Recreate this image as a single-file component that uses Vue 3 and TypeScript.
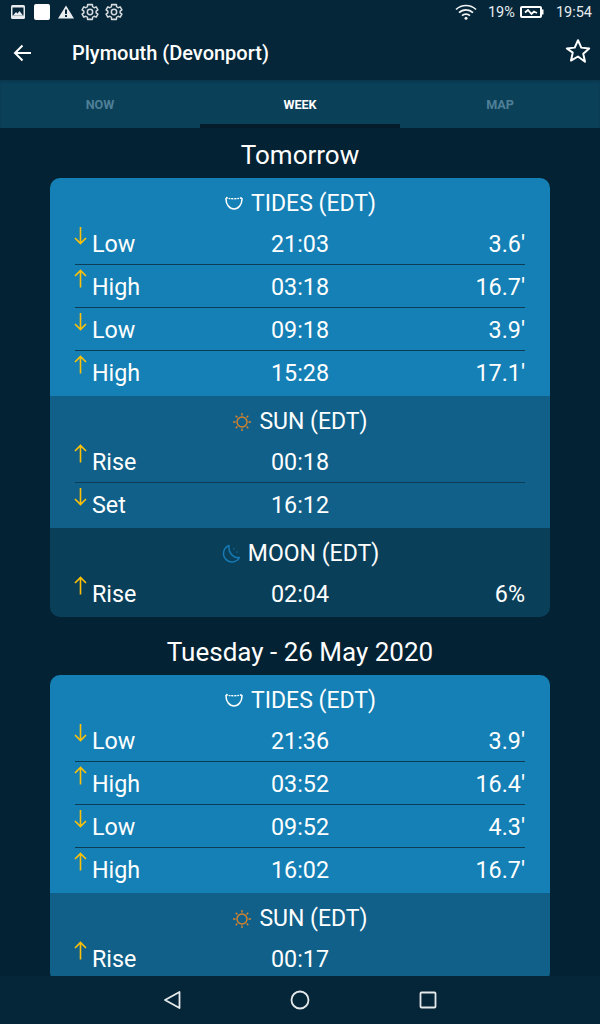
<template>
  <div class="screen">
    <div class="status-bar">
      <div class="status-left">
        <svg class="ic" width="24" height="24" viewBox="0 0 24 24">
          <rect x="5" y="5" width="14" height="14" rx="1.500" fill="#e8ecef" />
          <rect x="6.500" y="7.500" width="11" height="8" fill="#042638" />
          <path d="M7 15.500l3-3.500 1.500 1.500 2-2.500 3.500 4.500z" fill="#e8ecef" />
        </svg>
        <span class="box-slot"><span class="white-box"></span></span>
        <svg class="ic" width="24" height="24" viewBox="0 0 24 24">
          <path d="M12 5.500L20 18.500H4z" fill="#e8ecef" />
          <rect x="11" y="9.500" width="2" height="4.500" fill="#042638" />
          <rect x="11" y="15" width="2" height="2" fill="#042638" />
        </svg>
        <svg v-for="n in 2" :key="n" class="ic" width="24" height="24" viewBox="-1.500 -1.500 27 27">
          <path d="M18.900 13a7 7 0 0 0 0-2l2-1.500-1.900-3.300-2.300 1a7 7 0 0 0-1.700-1L14.700 3.700h-5.400L9 6.200a7 7 0 0 0-1.700 1l-2.300-1-1.900 3.300 2 1.500a7 7 0 0 0 0 2l-2 1.500 1.900 3.300 2.300-1a7 7 0 0 0 1.700 1l.3 2.500h5.400l.3-2.500a7 7 0 0 0 1.700-1l2.300 1 1.900-3.300z" fill="none" stroke="#d5dade" stroke-width="1.700" stroke-linejoin="round" />
          <circle cx="12" cy="12" r="3" fill="none" stroke="#d5dade" stroke-width="1.700" />
        </svg>
      </div>
      <div class="status-right">
        <svg class="wifi" width="22" height="16" viewBox="0 0 22 16">
          <path d="M1 5.500a14.500 14.500 0 0 1 20 0M4 8.700a10 10 0 0 1 14 0M7 11.700a5.700 5.700 0 0 1 8 0" fill="none" stroke="#f2f4f5" stroke-width="1.700" />
          <circle cx="11" cy="14.300" r="1.500" fill="#f2f4f5" />
        </svg>
        <span class="batt-text">19%</span>
        <svg width="25" height="14" viewBox="0 0 25 14">
          <rect x="2" y="2" width="20" height="10" rx="1" fill="none" stroke="#fff" stroke-width="2" />
          <rect x="22.500" y="4.500" width="2" height="5" fill="#fff" />
          <path d="M6 7.500l3-2.500 3.500 4 2.500-2.500 3 1.500" fill="none" stroke="#fff" stroke-width="1.800" />
        </svg>
        <span class="clock">19:54</span>
      </div>
    </div>

    <div class="toolbar">
      <svg class="back" width="24" height="24" viewBox="0 0 24 24">
        <path d="M20 12H4.500M11.500 4.500L4 12l7.500 7.500" fill="none" stroke="#fff" stroke-width="2" />
      </svg>
      <div class="toolbar-title">Plymouth (Devonport)</div>
      <svg class="star" width="28" height="28" viewBox="0 0 24 24">
        <path d="M12 2.800l2.800 6.300 6.800.7-5.100 4.600 1.500 6.800L12 16.700l-6 3.500 1.500-6.800L2.400 9.800l6.800-.7z" fill="none" stroke="#fff" stroke-width="1.700" stroke-linejoin="round" />
      </svg>
    </div>

    <div class="tabs">
      <div v-for="tab in tabs" :key="tab" class="tab" :class="{ active: tab === 'WEEK' }">{{ tab }}</div>
    </div>

    <div class="content">
      <div v-for="day in days" :key="day.title" class="day">
        <div class="day-title">{{ day.title }}</div>
        <div class="card">
          <div v-for="section in day.sections" :key="section.name" class="section" :class="section.kind">
            <div class="section-head">
              <svg v-if="section.kind === 'tides'" class="head-ic" width="20" height="20" viewBox="0 0 20 20">
                <path d="M2 4v1c0 5.500 3.500 10 8 10s8-4.500 8-10V4" fill="none" stroke="#fff" stroke-width="1.500" />
                <path d="M2 3.500c2 1 4 1.200 8 1.200s6-.2 8-1.200" fill="none" stroke="#fff" stroke-width="1.400" stroke-dasharray="2 .8" />
              </svg>
              <svg v-else-if="section.kind === 'sun'" class="head-ic" width="20" height="20" viewBox="0 0 20 20">
                <circle cx="10" cy="10" r="5" fill="none" stroke="#d9842b" stroke-width="1.400" />
                <path d="M10 1v2.500M10 16.500V19M1 10h2.500M16.500 10H19M3.700 3.700l1.700 1.700M14.600 14.600l1.700 1.700M3.700 16.300l1.700-1.700M14.600 5.400l1.700-1.700" stroke="#d9842b" stroke-width="1.400" />
              </svg>
              <svg v-else class="head-ic" width="20" height="20" viewBox="0 0 20 20">
                <path d="M8 1.500a8.500 8.500 0 1 0 10.500 12c-5.500 1-11.500-4-10.500-12z" fill="none" stroke="#1678b0" stroke-width="1.500" stroke-linejoin="round" />
                <circle cx="13" cy="5" r=".7" fill="#1678b0" />
                <circle cx="16" cy="8" r=".7" fill="#1678b0" />
              </svg>
              <span>{{ section.name }}</span>
            </div>
            <div v-for="(row, i) in section.rows" :key="i" class="row">
              <div class="row-label">
                <svg class="arrow" width="13" height="20" viewBox="0 0 13 20">
                  <path v-if="row.up" d="M6.500 18.500V1.500M1 7l5.500-5.500L12 7" fill="none" stroke="#ffc107" stroke-width="1.600" />
                  <path v-else d="M6.500 1v16.500M1 12l5.500 5.500L12 12" fill="none" stroke="#ffc107" stroke-width="1.600" />
                </svg>
                <span>{{ row.label }}</span>
              </div>
              <div class="row-time">{{ row.time }}</div>
              <div class="row-value">{{ row.value }}</div>
            </div>
          </div>
        </div>
      </div>
    </div>

    <div class="nav-bar">
      <svg width="20" height="20" viewBox="0 0 20 20">
        <path d="M17.500 2v16L3 10z" fill="none" stroke="#e6e9eb" stroke-width="1.800" stroke-linejoin="round" />
      </svg>
      <svg width="20" height="20" viewBox="0 0 20 20">
        <circle cx="10" cy="10" r="8.500" fill="none" stroke="#e6e9eb" stroke-width="1.800" />
      </svg>
      <svg width="20" height="20" viewBox="0 0 20 20">
        <rect x="2.500" y="2.500" width="15" height="15" rx="1" fill="none" stroke="#e6e9eb" stroke-width="1.800" />
      </svg>
    </div>
  </div>
</template>

<script setup lang="ts">
interface Row {
  up: boolean
  label: string
  time: string
  value: string
}

interface Section {
  kind: 'tides' | 'sun' | 'moon'
  name: string
  rows: Row[]
}

const tabs = ['NOW', 'WEEK', 'MAP']

const days: { title: string; sections: Section[] }[] = [
  {
    title: 'Tomorrow',
    sections: [
      {
        kind: 'tides',
        name: 'TIDES (EDT)',
        rows: [
          { up: false, label: 'Low', time: '21:03', value: "3.6'" },
          { up: true, label: 'High', time: '03:18', value: "16.7'" },
          { up: false, label: 'Low', time: '09:18', value: "3.9'" },
          { up: true, label: 'High', time: '15:28', value: "17.1'" }
        ]
      },
      {
        kind: 'sun',
        name: 'SUN (EDT)',
        rows: [
          { up: true, label: 'Rise', time: '00:18', value: '' },
          { up: false, label: 'Set', time: '16:12', value: '' }
        ]
      },
      {
        kind: 'moon',
        name: 'MOON (EDT)',
        rows: [{ up: true, label: 'Rise', time: '02:04', value: '6%' }]
      }
    ]
  },
  {
    title: 'Tuesday - 26 May 2020',
    sections: [
      {
        kind: 'tides',
        name: 'TIDES (EDT)',
        rows: [
          { up: false, label: 'Low', time: '21:36', value: "3.9'" },
          { up: true, label: 'High', time: '03:52', value: "16.4'" },
          { up: false, label: 'Low', time: '09:52', value: "4.3'" },
          { up: true, label: 'High', time: '16:02', value: "16.7'" }
        ]
      },
      {
        kind: 'sun',
        name: 'SUN (EDT)',
        rows: [{ up: true, label: 'Rise', time: '00:17', value: '' }]
      }
    ]
  }
]
</script>

<style>
html,
body {
  margin: 0;
  background: #042638;
}
</style>

<style scoped>
.screen {
  width: 600px;
  height: 1024px;
  display: flex;
  flex-direction: column;
  overflow: hidden;
  background: #042638;
  color: #fff;
  font-family: Roboto, "Liberation Sans", sans-serif;
}

.status-bar {
  height: 24px;
  flex-shrink: 0;
  display: flex;
  justify-content: space-between;
  align-items: center;
  padding: 0 8px 0 6px;
  font-size: 14.500px;
  color: #e8ecef;
}

.status-left,
.status-right {
  display: flex;
  align-items: center;
}

.box-slot {
  width: 24px;
  height: 24px;
  display: flex;
  align-items: center;
  justify-content: center;
}

.white-box {
  width: 16px;
  height: 16px;
  border-radius: 2px;
  background: #fff;
}

.wifi {
  margin-right: 11px;
}

.batt-text {
  margin-right: 4px;
}

.clock {
  margin-left: 12px;
}

.toolbar {
  height: 56px;
  flex-shrink: 0;
  display: flex;
  align-items: center;
  padding: 0 8px 0 11px;
}

.back {
  margin-top: 2px;
}

.toolbar-title {
  flex: 1;
  margin-left: 37px;
  padding-top: 2px;
  font-size: 20px;
  font-weight: 500;
}

.star {
  margin-top: -2px;
}

.tabs {
  height: 48px;
  flex-shrink: 0;
  display: flex;
  background: #0b4059;
  box-shadow: inset 0 2px 2px rgba(0, 0, 0, 0.15);
}

.tab {
  flex: 1;
  display: flex;
  align-items: center;
  justify-content: center;
  padding-top: 1px;
  font-size: 12.600px;
  font-weight: 700;
  color: #4f7f96;
}

.tab.active {
  color: #fff;
  border-bottom: 4px solid #041c2a;
  padding-top: 5px;
}

.content {
  flex: 1;
  min-height: 0;
  overflow: hidden;
  padding: 10px 50px 0;
  background: #032233;
}

.day + .day {
  margin-top: 18px;
}

.day-title {
  height: 34px;
  margin-bottom: 6px;
  line-height: 34px;
  text-align: center;
  font-size: 26px;
}

.card {
  border-radius: 10px;
  overflow: hidden;
}

.section {
  padding: 0 25px 2px;
}

.section.tides {
  background: #1580b5;
}

.section.sun {
  background: #106089;
}

.section.moon {
  background: #0a3f5a;
}

.section-head {
  height: 44px;
  display: flex;
  align-items: center;
  justify-content: center;
  gap: 7px;
  padding-top: 7px;
  box-sizing: border-box;
  font-size: 23px;
}

.head-ic {
  flex-shrink: 0;
}

.row {
  height: 43px;
  box-sizing: border-box;
  padding-top: 1px;
  display: grid;
  grid-template-columns: 1fr 1fr 1fr;
  align-items: center;
  font-size: 23.300px;
  border-bottom: 1px solid #0b3d57;
}

.row:last-child {
  border-bottom: none;
}

.row-label {
  display: flex;
  align-items: center;
}

.row-label span {
  margin-left: 5px;
}

.arrow {
  align-self: flex-start;
  margin-top: -4px;
  margin-left: -1px;
}

.row-time {
  text-align: center;
}

.row-value {
  text-align: right;
}

.nav-bar {
  height: 48px;
  flex-shrink: 0;
  display: flex;
  align-items: center;
  justify-content: center;
  gap: 108px;
  background: #042638;
}
</style>
